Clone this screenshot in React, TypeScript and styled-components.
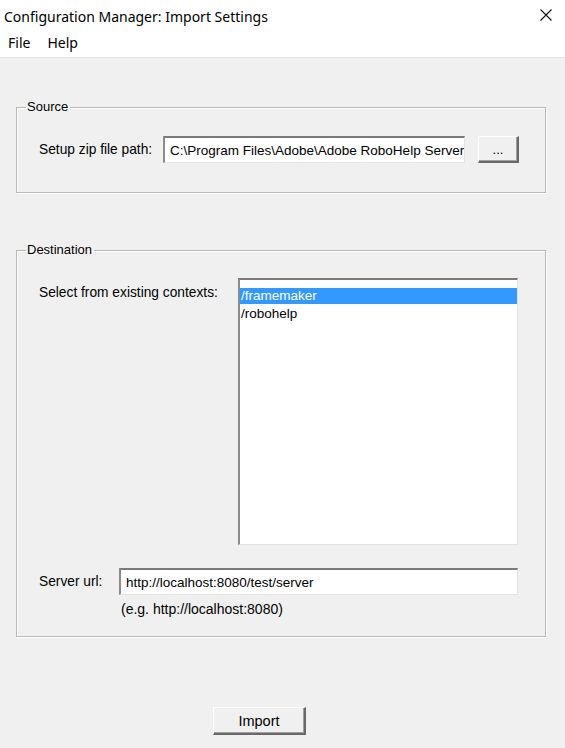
import React from "react";
import styled, { createGlobalStyle } from "styled-components";

const contexts = ["/framemaker", "/robohelp"];

const App: React.FC = () => {
  return (
    <>
      <GlobalStyle />
      <Window>
        <TitleBar>
          <Title>Configuration Manager: Import Settings</Title>
          <CloseButton aria-label="Close">
            <svg width="12" height="12" viewBox="0 0 12 12">
              <path d="M0.5 0.5 L11.5 11.5 M11.5 0.5 L0.5 11.5" stroke="#111" strokeWidth="1.1" />
            </svg>
          </CloseButton>
        </TitleBar>
        <MenuBar>
          <MenuItem>File</MenuItem>
          <MenuItem>Help</MenuItem>
        </MenuBar>

        <Body>
          <GroupBox $padding="21px 26px 29px 22px">
            <Legend>Source</Legend>
            <Row>
              <Label $width={124}>Setup zip file path:</Label>
              <TextBox $width={302} defaultValue="C:\Program Files\Adobe\Adobe RoboHelp Server" />
              <PushButton $width={41} $gap={13}>...</PushButton>
            </Row>
          </GroupBox>

          <GroupBox $padding="20px 26px 19px 22px" $top={49}>
            <Legend>Destination</Legend>
            <Row $align="flex-start">
              <Label $width={199} $offset={7}>
                Select from existing contexts:
              </Label>
              <ListBox>
                {contexts.map((c, i) => (
                  <ListItem key={c} $selected={i === 0}>
                    {c}
                  </ListItem>
                ))}
              </ListBox>
            </Row>
            <Row $top={23}>
              <Label $width={80}>Server url:</Label>
              <TextBox $width={399} defaultValue="http://localhost:8080/test/server" />
            </Row>
            <Hint>(e.g. http://localhost:8080)</Hint>
          </GroupBox>

          <Footer>
            <PushButton $width={93} $height={28} $size={14.5}>
              Import
            </PushButton>
          </Footer>
        </Body>
      </Window>
    </>
  );
};

const GlobalStyle = createGlobalStyle`
  html, body {
    margin: 0;
    padding: 0;
    background: #f0f0f0;
  }
  body {
    font-family: "Liberation Sans", Arial, sans-serif;
    color: #000;
  }
`;

const Window = styled.div`
  width: 565px;
  height: 748px;
  display: flex;
  flex-direction: column;
  background: #f0f0f0;
  overflow: hidden;
`;

const TitleBar = styled.div`
  height: 33px;
  background: #fff;
  display: flex;
  align-items: center;
  justify-content: space-between;
  padding-left: 4px;
`;

const Title = styled.div`
  font-family: "Noto Sans", "Liberation Sans", sans-serif;
  font-size: 14px;
  color: #000;
  margin-top: -1px;
`;

const CloseButton = styled.div`
  width: 38px;
  height: 33px;
  display: flex;
  align-items: center;
  justify-content: center;
  margin-top: -3px;
`;

const MenuBar = styled.div`
  height: 24px;
  background: #fff;
  display: flex;
  align-items: flex-start;
  padding-left: 8px;
  gap: 17px;
  border-bottom: 1px solid #e6e6e6;
`;

const MenuItem = styled.span`
  font-family: "Noto Sans", "Liberation Sans", sans-serif;
  font-size: 14px;
  line-height: 20px;
  color: #000;
`;

const Body = styled.div`
  flex: 1;
  padding: 41px 19px 0 16px;
  display: flex;
  flex-direction: column;
`;

const GroupBox = styled.fieldset<{ $padding: string; $top?: number }>`
  margin: ${(p) => p.$top ?? 0}px 0 0 0;
  padding: ${(p) => p.$padding};
  border: 1px solid #b9b9b9;
  box-shadow: 1px 1px 0 #fff, inset 1px 1px 0 #fff;
  min-width: 0;
`;

const Legend = styled.legend`
  font-size: 13px;
  line-height: 16px;
  padding: 0 2px 0 1px;
  margin-left: -13px;
  color: #000;
`;

const Row = styled.div<{ $align?: string; $top?: number }>`
  display: flex;
  align-items: ${(p) => p.$align ?? "center"};
  margin-top: ${(p) => p.$top ?? 0}px;
`;

const Label = styled.label<{ $width: number; $offset?: number }>`
  width: ${(p) => p.$width}px;
  flex-shrink: 0;
  font-size: 13.75px;
  color: #000;
  padding-top: ${(p) => p.$offset ?? 0}px;
`;

const TextBox = styled.input<{ $width: number }>`
  box-sizing: border-box;
  width: ${(p) => p.$width}px;
  height: 27px;
  margin: 0;
  padding: 0 0 0 5px;
  font-family: "Liberation Sans", Arial, sans-serif;
  font-size: 13.5px;
  color: #000;
  background: #fff;
  border-style: solid;
  border-width: 2px 1px 1px 2px;
  border-color: #7a7a7a #e3e3e3 #e3e3e3 #8c8c8c;
  outline: none;
`;

const PushButton = styled.button<{
  $width: number;
  $height?: number;
  $gap?: number;
  $size?: number;
}>`
  box-sizing: border-box;
  width: ${(p) => p.$width}px;
  height: ${(p) => p.$height ?? 27}px;
  margin: 0 0 0 ${(p) => p.$gap ?? 0}px;
  padding: 0;
  font-family: "Liberation Sans", Arial, sans-serif;
  font-size: ${(p) => p.$size ?? 13}px;
  color: #000;
  background: #f0f0f0;
  border-style: solid;
  border-width: 1px 2px 2px 1px;
  border-color: #fff #696969 #696969 #fff;
  box-shadow: inset -1px -1px 0 #a0a0a0;
`;

const ListBox = styled.div`
  box-sizing: border-box;
  width: 280px;
  height: 267px;
  background: #fff;
  padding-top: 8px;
  border-style: solid;
  border-width: 2px 1px 1px 2px;
  border-color: #7a7a7a #e3e3e3 #e3e3e3 #8c8c8c;
`;

const ListItem = styled.div<{ $selected: boolean }>`
  height: 18px;
  line-height: 16px;
  padding-left: 1px;
  font-size: 13.5px;
  color: ${(p) => (p.$selected ? "#fff" : "#000")};
  background: ${(p) => (p.$selected ? "#3399ff" : "transparent")};
  box-sizing: border-box;
  border-bottom: 2px solid #fff;
`;

const Hint = styled.div`
  margin: 6px 0 0 82px;
  font-size: 14px;
  color: #000;
`;

const Footer = styled.div`
  margin-top: 70px;
  padding-left: 197px;
`;

export default App;
